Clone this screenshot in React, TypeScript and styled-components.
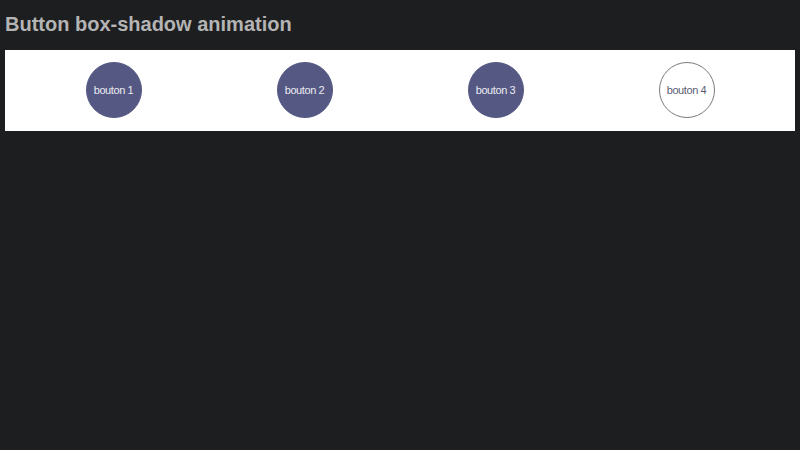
import React from 'react';
import styled, { createGlobalStyle } from 'styled-components';

const GlobalStyle = createGlobalStyle`
  body {
    margin: 0;
    padding: 0 5px;
    background: #1d1e20;
    font-family: "Liberation Sans", Arial, sans-serif;
  }
`;

const Title = styled.h1`
  margin: 0;
  padding: 12px 0 14px;
  font-size: 20px;
  line-height: 24px;
  font-weight: bold;
  color: #b4b4b4;
`;

const Panel = styled.div`
  background: #fff;
  padding: 12px 13px 13px;
  display: grid;
  grid-template-columns: repeat(4, 1fr);
  justify-items: center;
`;

const Bouton = styled.button<{ $outline?: boolean }>`
  width: 56px;
  height: 56px;
  border-radius: 50%;
  padding: 0;
  font-family: "Liberation Sans", Arial, sans-serif;
  font-size: 11px;
  letter-spacing: -0.4px;
  cursor: pointer;
  background: ${p => (p.$outline ? '#fff' : '#545882')};
  color: ${p => (p.$outline ? '#5b5d72' : '#ececf2')};
  border: 1px solid ${p => (p.$outline ? '#7a7a7a' : '#545882')};
`;

const App: React.FC = () => (
  <>
    <GlobalStyle />
    <Title>Button box-shadow animation</Title>
    <Panel>
      <Bouton>bouton 1</Bouton>
      <Bouton>bouton 2</Bouton>
      <Bouton>bouton 3</Bouton>
      <Bouton $outline>bouton 4</Bouton>
    </Panel>
  </>
);

export default App;
